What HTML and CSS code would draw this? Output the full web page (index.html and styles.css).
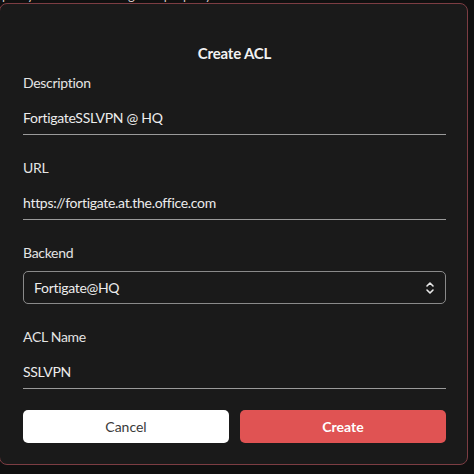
FILE: index.html
```html
<!DOCTYPE html>
<html>
<head>
<meta charset="utf-8">
<link rel="stylesheet" href="styles.css">
</head>
<body>
<div class="peek"><span>proxy host is not configured properly</span></div>
<div class="modal">
  <h2 class="title">Create ACL</h2>
  <div class="field">
    <div class="label">Description</div>
    <div class="input">FortigateSSLVPN @ HQ</div>
  </div>
  <div class="field">
    <div class="label">URL</div>
    <div class="input">https://fortigate.at.the.office.com</div>
  </div>
  <div class="field">
    <div class="label">Backend</div>
    <div class="select">
      <span>Fortigate@HQ</span>
      <svg class="chev" width="10" height="16" viewBox="0 0 10 16"><path d="M2 6 L5 3 L8 6 M2 10 L5 13 L8 10" fill="none" stroke="#e8e8e8" stroke-width="1.6" stroke-linecap="round" stroke-linejoin="round"/></svg>
    </div>
  </div>
  <div class="field last">
    <div class="label">ACL Name</div>
    <div class="input">SSLVPN</div>
  </div>
  <div class="actions">
    <button class="btn cancel">Cancel</button>
    <button class="btn create">Create</button>
  </div>
</div>
</body>
</html>
```

FILE: styles.css
```css
html, body {
  margin: 0;
  padding: 0;
  background: #101010;
  font-family: Lato, "Open Sans", sans-serif;
  color: #e8e8e8;
  overflow: hidden;
}
.peek {
  height: 3px;
  overflow: hidden;
  padding-left: 2px;
  font-size: 13px;
  color: #d8c8c8;
}
.peek span {
  display: block;
  margin-top: -12px;
  line-height: 14px;
}
.modal {
  margin-left: -1px;
  width: 469px;
  box-sizing: border-box;
  border: 1px solid #7c3d43;
  border-radius: 8px;
  background: #1a1a1a;
  padding: 39px 21px 21px 23px;
}
.title {
  margin: 0 0 10px;
  text-align: center;
  font-size: 15px;
  font-weight: 700;
  line-height: 20px;
  color: #f2f2f2;
  letter-spacing: -0.2px;
}
.field {
  margin-bottom: 23px;
}
.field.last {
  margin-bottom: 21px;
}
.label {
  font-size: 14px;
  line-height: 20px;
  margin-bottom: 8px;
  color: #e4e4e4;
  letter-spacing: -0.3px;
}
.input {
  height: 34px;
  box-sizing: border-box;
  border-bottom: 1px solid #9a9a9a;
  font-size: 14px;
  line-height: 32px;
  padding-top: 1px;
  color: #ececec;
  letter-spacing: -0.3px;
}
.select {
  height: 33px;
  box-sizing: border-box;
  border: 1px solid #8a8a8a;
  border-radius: 5px;
  display: flex;
  align-items: center;
  justify-content: space-between;
  padding: 0 10px 0 10px;
  font-size: 14px;
  color: #ececec;
  letter-spacing: -0.3px;
}
.chev {
  display: block;
}
.actions {
  display: grid;
  grid-template-columns: 1fr 1fr;
  gap: 11px;
}
.btn {
  height: 33px;
  border: none;
  border-radius: 5px;
  font-family: Lato, "Open Sans", sans-serif;
  font-size: 14px;
}
.cancel {
  background: #ffffff;
  color: #3a3a3a;
}
.create {
  background: #e05353;
  color: #ffffff;
  font-weight: 700;
}
```
